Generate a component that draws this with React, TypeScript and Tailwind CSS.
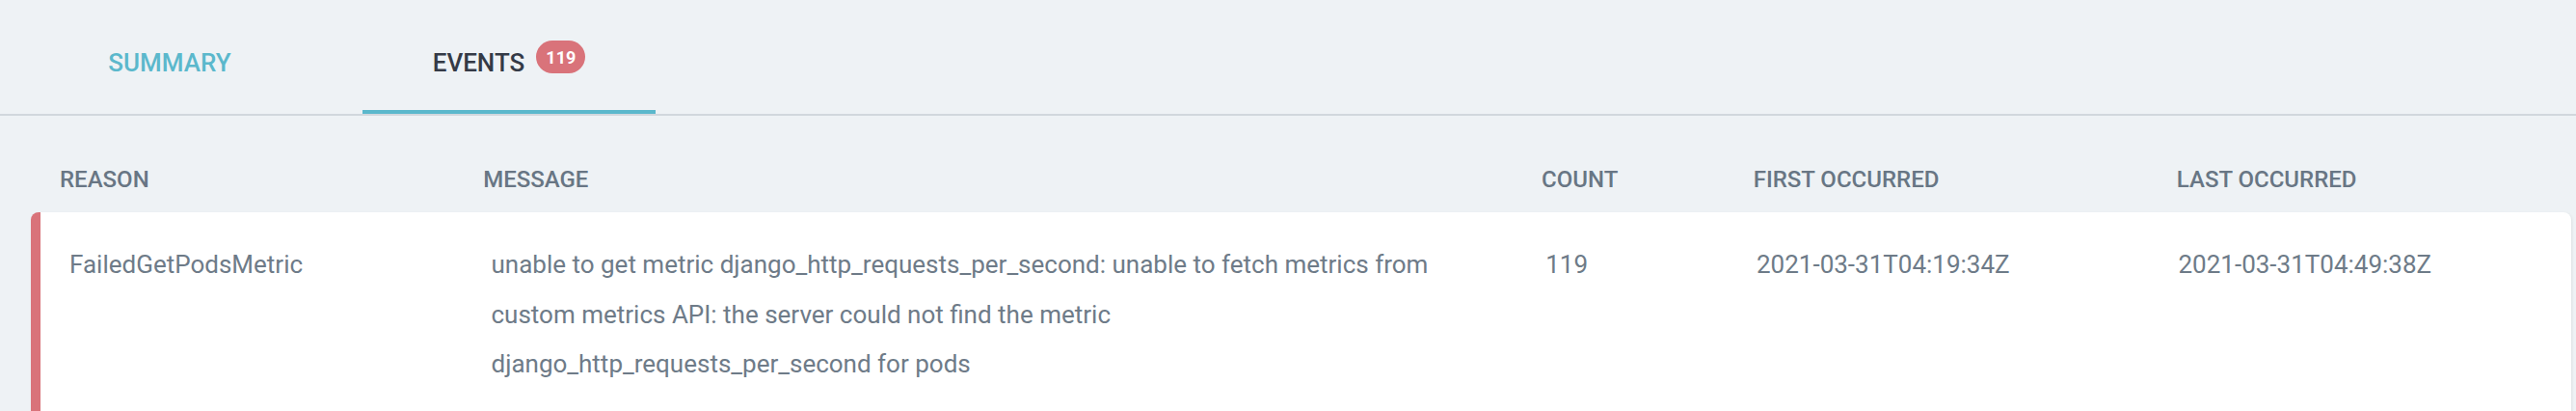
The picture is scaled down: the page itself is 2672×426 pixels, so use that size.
import React from 'react';

const columns = ['Reason', 'Message', 'Count', 'First Occurred', 'Last Occurred'];

const events = [
  {
    reason: 'FailedGetPodsMetric',
    message:
      'unable to get metric django_http_requests_per_second: unable to fetch metrics from custom metrics API: the server could not find the metric django_http_requests_per_second for pods',
    count: 119,
    first: '2021-03-31T04:19:34Z',
    last: '2021-03-31T04:49:38Z',
  },
];

const App: React.FC = () => {
  return (
    <div className="min-h-screen bg-[#eef2f5] font-['Roboto','Liberation_Sans',sans-serif]">
      {/* Tabs */}
      <div className="flex gap-[48px] pl-[24px] border-b-2 border-[#d1d7dd]">
        <div className="w-[304px] h-[118px] pt-[52px] flex justify-center">
          <span className="text-[26px] leading-[26px] font-medium uppercase text-[#5bb8cc]">Summary</span>
        </div>
        <div className="w-[304px] h-[118px] pt-[52px] flex justify-center border-b-4 border-[#5bb8cc]">
          <div className="flex items-start gap-[12px]">
            <span className="text-[26px] leading-[26px] font-medium uppercase text-[#343a46]">Events</span>
            <span className="-mt-[10px] h-[34px] px-[10px] rounded-full bg-[#d9737a] text-white text-[18px] font-bold flex items-center justify-center">
              {events[0].count}
            </span>
          </div>
        </div>
      </div>

      {/* Table header */}
      <div className="ml-[32px] mr-[5px] grid grid-cols-[2fr_5fr_1fr_2fr_2fr] pt-[54px] pb-[22px]">
        {columns.map((col) => (
          <div key={col} className="pl-[30px] text-[24px] leading-[24px] font-medium uppercase text-[#687684]">
            {col}
          </div>
        ))}
      </div>

      {/* Rows */}
      {events.map((ev) => (
        <div
          key={ev.reason}
          className="ml-[32px] mr-[5px] bg-white rounded-t-[8px] border-l-[10px] border-[#d9737a] shadow-[1px_1px_3px_rgba(0,0,0,0.08)]"
        >
          <div className="grid grid-cols-[2fr_5fr_1fr_2fr_2fr] pt-[29px] pb-[29px] text-[26px] leading-[51.5px] text-[#6e7b88]">
            <div className="pl-[30px] pr-[30px]">{ev.reason}</div>
            <div className="pl-[30px] pr-[30px]">{ev.message}</div>
            <div className="pl-[30px] pr-[30px]">{ev.count}</div>
            <div className="pl-[30px] pr-[30px]">{ev.first}</div>
            <div className="pl-[30px] pr-[30px]">{ev.last}</div>
          </div>
        </div>
      ))}
    </div>
  );
};

export default App;
